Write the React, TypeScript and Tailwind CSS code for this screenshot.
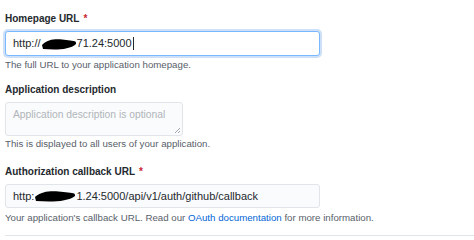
function Redact({ w }: { w: number }) {
  return (
    <svg width={w} height="12" viewBox={`0 0 ${w} 12`} className="inline-block align-[-2px]">
      <path
        d={`M1 7 C ${w * 0.2} 0, ${w * 0.5} 1, ${w * 0.7} 2 C ${w * 0.85} 3, ${w} 2, ${w - 1} 6 C ${w * 0.8} 12, ${w * 0.4} 12, 2 11 Z`}
        fill="#000"
      />
    </svg>
  );
}

function Required() {
  return <span className="ml-1 text-[#cb2431]">*</span>;
}

export default function App() {
  return (
    <div className="h-[240px] w-[474px] overflow-hidden bg-white pl-[5px] pt-[12px] font-['Liberation_Sans',Arial,sans-serif] text-[#24292e]">
      <div className="pr-[154px]">
        <label className="block text-[10px] font-bold leading-[14px]">
          Homepage URL
          <Required />
        </label>
        <div className="mt-[5px] flex h-[25px] items-center rounded-[3px] border border-[#79b8ff] bg-white px-[7px] text-[11px] shadow-[0_0_0_2px_rgba(3,102,214,0.2)]">
          <span>http://</span>
          <Redact w={36} />
          <span>71.24:5000</span>
          <span className="ml-px h-[13px] w-px bg-[#24292e]" />
        </div>
        <p className="mt-[2px] text-[9.7px] leading-[13px] text-[#586069]">
          The full URL to your application homepage.
        </p>
      </div>

      <div className="mt-[12px]">
        <label className="block text-[10px] font-bold leading-[14px]">Application description</label>
        <div className="relative mt-[5px] h-[34px] w-[178px] whitespace-nowrap rounded-[3px] border border-[#e1e4e8] bg-[#fafbfc] px-[7px] pt-[4px] text-[10.3px] text-[#b0b5ba]">
          Application description is optional
          <svg width="7" height="7" viewBox="0 0 7 7" className="absolute bottom-[1px] right-[1px]">
            <path d="M6 1 L1 6 M6 4 L4 6" stroke="#8a8f95" strokeWidth="0.8" />
          </svg>
        </div>
        <p className="mt-[1px] text-[9.7px] leading-[13px] text-[#586069]">
          This is displayed to all users of your application.
        </p>
      </div>

      <div className="mt-[15px]">
        <label className="block text-[10px] font-bold leading-[14px]">
          Authorization callback URL
          <Required />
        </label>
        <div className="mt-[5px] flex h-[24px] w-[315px] items-center rounded-[3px] border border-[#e1e4e8] bg-[#fafbfc] px-[7px] text-[11px]">
          <span>http:</span>
          <Redact w={42} />
          <span>1.24:5000/api/v1/auth/github/callback</span>
        </div>
        <p className="mt-[3px] text-[9.7px] leading-[13px] text-[#586069]">
          Your application's callback URL. Read our{' '}
          <a className="text-[#0366d6]">OAuth documentation</a> for more information.
        </p>
      </div>

      <div className="mt-[11px] border-t border-[#e1e4e8]" />
    </div>
  );
}
